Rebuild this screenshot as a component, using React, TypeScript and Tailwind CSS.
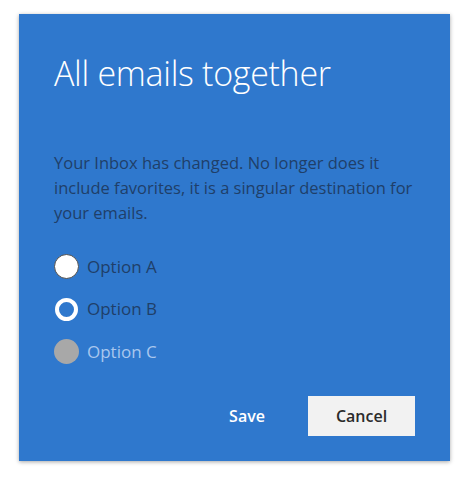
import React, { useState } from 'react';

const options = [
  { id: 'a', label: 'Option A', disabled: false },
  { id: 'b', label: 'Option B', disabled: false },
  { id: 'c', label: 'Option C', disabled: true },
] as const;

const Radio = ({ checked, disabled }: { checked: boolean; disabled: boolean }) => {
  if (disabled) {
    return <span className="block w-[25px] h-[25px] rounded-full bg-[#a8a8a8]" />;
  }
  if (checked) {
    return <span className="block w-[23px] h-[23px] rounded-full border-[4px] border-white bg-[#2f78cd] mx-[1px]" />;
  }
  return <span className="block w-[25px] h-[25px] rounded-full border-[1.5px] border-[#505050] bg-white" />;
};

const App = () => {
  const [selected, setSelected] = useState<string>('b');

  return (
    <div className="w-[474px] h-[482px] bg-white pt-[14px] pl-[19px]" style={{ fontFamily: '"Open Sans", "Noto Sans", sans-serif' }}>
      <div className="w-[431px] h-[447px] bg-[#2f78cd] shadow-[0_1px_4px_rgba(0,0,0,0.35)] pl-[35px] pr-[35px] pt-[37px]">
        <h1 className="text-[34px] leading-[44px] font-light text-white tracking-[-0.3px]">All emails together</h1>
        <p className="mt-[55px] text-[16.5px] leading-[25px] text-[#1f3f69]">
          Your Inbox has changed. No longer does it include favorites, it is a singular destination for your emails.
        </p>
        <div className="mt-[29px] flex flex-col gap-[17.5px]">
          {options.map((opt) => (
            <button
              key={opt.id}
              disabled={opt.disabled}
              onClick={() => setSelected(opt.id)}
              className="flex items-center gap-[8px] h-[25px] text-left"
            >
              <Radio checked={selected === opt.id} disabled={opt.disabled} />
              <span className={opt.disabled ? 'text-[17px] text-[#a9c7ee]' : 'text-[17px] text-[#1f3f69]'}>{opt.label}</span>
            </button>
          ))}
        </div>
        <div className="mt-[32px] flex justify-end items-center gap-[20px]">
          <button className="w-[82px] h-[40px] text-[16px] font-semibold text-white">Save</button>
          <button className="w-[107px] h-[40px] bg-[#f2f2f2] text-[16px] font-semibold text-[#2b2b2b]">Cancel</button>
        </div>
      </div>
    </div>
  );
};

export default App;
